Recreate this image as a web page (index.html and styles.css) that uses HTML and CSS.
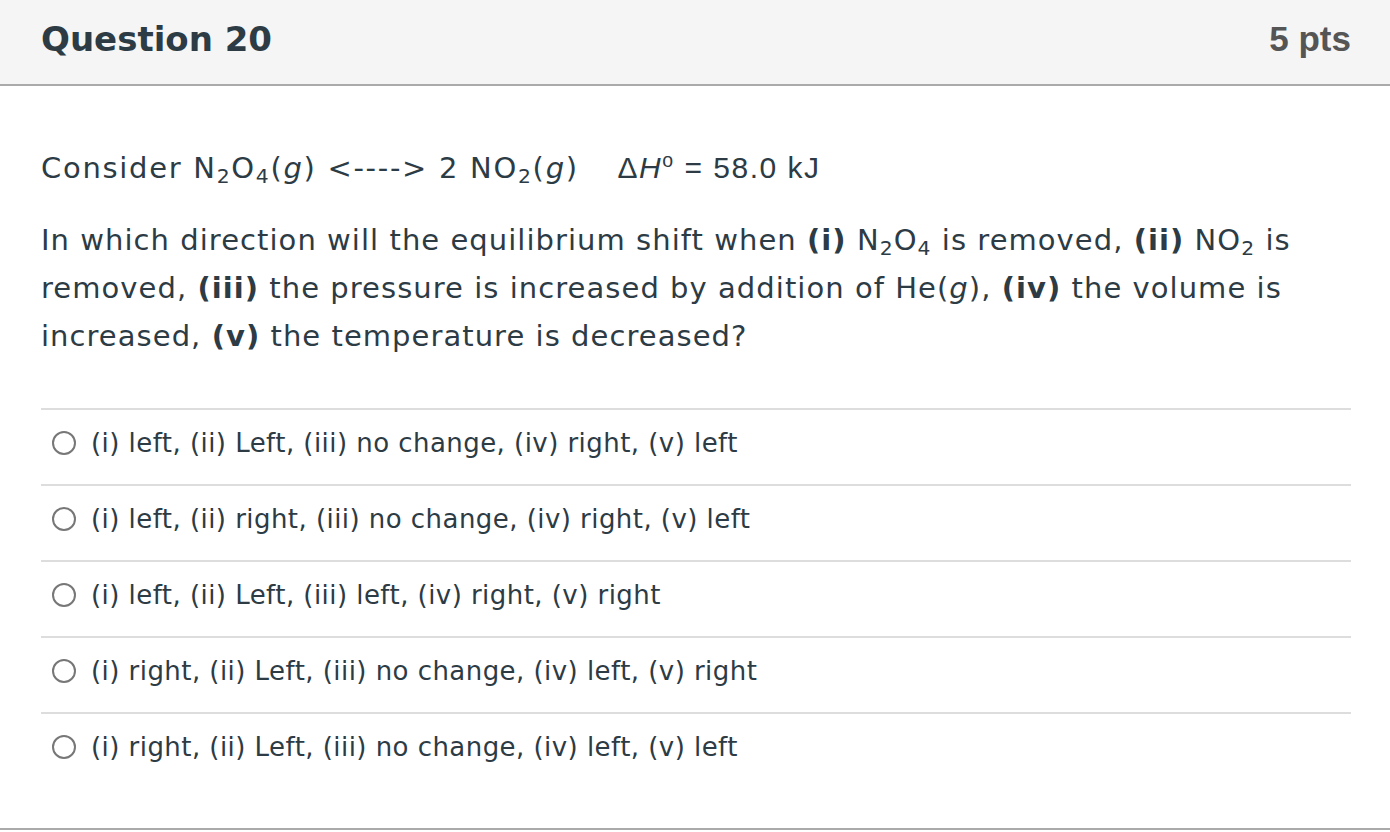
FILE: index.html
```html
<!DOCTYPE html>
<html>
<head>
<meta charset="utf-8">
<link rel="stylesheet" href="styles.css">
</head>
<body>
<div class="question">
  <div class="header">
    <h2 class="title">Question 20</h2>
    <div class="pts">5 pts</div>
  </div>
  <div class="content">
    <p class="eq">Consider N<sub>2</sub>O<sub>4</sub>(<em>g</em>) &lt;----&gt; 2 NO<sub>2</sub>(<em>g</em>) &nbsp;&nbsp;<span class="dh">&Delta;<i>H</i><sup>o</sup> = 58.0 kJ</span></p>
    <p class="prompt">In which direction will the equilibrium shift when <b>(i)</b> N<sub>2</sub>O<sub>4</sub> is removed, <b>(ii)</b> NO<sub>2</sub> is removed, <b>(iii)</b> the pressure is increased by addition of He(<em>g</em>), <b>(iv)</b> the volume is increased, <b>(v)</b> the temperature is decreased?</p>
    <div class="answers">
      <label class="answer"><span class="radio"></span><span class="atext">(i) left, (ii) Left, (iii) no change, (iv) right, (v) left</span></label>
      <label class="answer"><span class="radio"></span><span class="atext">(i) left, (ii) right, (iii) no change, (iv) right, (v) left</span></label>
      <label class="answer"><span class="radio"></span><span class="atext">(i) left, (ii) Left, (iii) left, (iv) right, (v) right</span></label>
      <label class="answer"><span class="radio"></span><span class="atext">(i) right, (ii) Left, (iii) no change, (iv) left, (v) right</span></label>
      <label class="answer"><span class="radio"></span><span class="atext">(i) right, (ii) Left, (iii) no change, (iv) left, (v) left</span></label>
    </div>
  </div>
</div>
</body>
</html>
```
FILE: styles.css
```css
html, body {
  margin: 0;
  padding: 0;
  background: #fff;
}
body {
  font-family: "DejaVu Sans", "Open Sans", sans-serif;
  color: #2d3b45;
}
.question {
  width: 1390px;
  height: 830px;
  border-bottom: 2px solid #aaaaaa;
  box-sizing: border-box;
}
.header {
  height: 86px;
  box-sizing: border-box;
  background: #f5f5f5;
  border-bottom: 2px solid #aaaaaa;
  display: flex;
  align-items: center;
  justify-content: space-between;
  padding: 0 39px 6px 41px;
}
.title {
  margin: 0;
  font-size: 34px;
  font-weight: 700;
  color: #2d3b45;
  letter-spacing: 0;
}
.pts {
  font-family: "Liberation Sans", Arial, sans-serif;
  font-weight: 700;
  font-size: 35px;
  color: #555555;
}
.content {
  padding: 0 39px 0 41px;
}
.eq {
  margin: 0;
  padding-top: 58px;
  font-size: 29px;
  line-height: 48px;
  letter-spacing: 1.7px;
}
.prompt {
  margin: 24px 0 0 0;
  font-size: 29px;
  line-height: 48px;
  letter-spacing: 1.05px;
}
sub {
  font-size: 70%;
  vertical-align: -0.25em;
  line-height: 0;
}
sup {
  font-size: 65%;
  vertical-align: 0.55em;
  line-height: 0;
}
.dh {
  font-family: "Liberation Sans", Arial, sans-serif;
  font-size: 30px;
  letter-spacing: 1.5px;
  margin-left: 6px;
}
.answers {
  margin-top: 48px;
}
.answer {
  display: flex;
  align-items: center;
  height: 76px;
  border-top: 2px solid #dddddd;
  box-sizing: border-box;
  font-size: 26px;
  letter-spacing: 0.45px;
  padding-bottom: 8px;
}
.radio {
  width: 20px;
  height: 20px;
  border: 2px solid #777777;
  border-radius: 50%;
  margin: 0 15px 0 11px;
  flex: none;
}
```
